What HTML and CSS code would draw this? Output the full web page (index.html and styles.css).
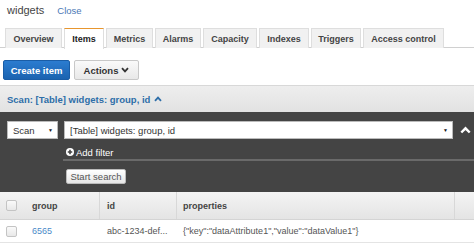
FILE: index.html
```html
<!DOCTYPE html>
<html>
<head>
<meta charset="utf-8">
<link rel="stylesheet" href="styles.css">
</head>
<body>
<div class="header">
  <span class="title">widgets</span>
  <a class="close">Close</a>
</div>
<div class="tabs">
  <div class="tab w1">Overview</div>
  <div class="tab w2 active">Items</div>
  <div class="tab w3">Metrics</div>
  <div class="tab w4">Alarms</div>
  <div class="tab w5">Capacity</div>
  <div class="tab w6">Indexes</div>
  <div class="tab w6">Triggers</div>
  <div class="tab w8">Access control</div>
</div>
<div class="toolbar">
  <button class="btn primary">Create item</button>
  <button class="btn secondary">Actions
    <svg class="chev" width="8" height="6" viewBox="0 0 8 6"><path d="M1 1.2 L4 4.4 L7 1.2" fill="none" stroke="#333" stroke-width="1.8"/></svg>
  </button>
</div>
<div class="scanbar">
  <span>Scan: [Table] widgets: group, id</span>
  <svg class="chev-up" width="8" height="6" viewBox="0 0 8 6"><path d="M1 4.8 L4 1.6 L7 4.8" fill="none" stroke="#2e6ea8" stroke-width="1.8"/></svg>
</div>
<div class="panel">
  <div class="row1">
    <div class="select small">Scan<span class="arrow">&#9660;</span></div>
    <div class="select wide">[Table] widgets: group, id<span class="arrow">&#9660;</span></div>
    <svg class="collapse" width="11" height="8" viewBox="0 0 11 8"><path d="M1.3 6.5 L5.5 2.3 L9.7 6.5" fill="none" stroke="#fff" stroke-width="2.4"/></svg>
  </div>
  <div class="filters">
    <div class="addfilter">
      <svg width="8" height="8" viewBox="0 0 10 10"><circle cx="5" cy="5" r="5" fill="#fff"/><path d="M5 2.2 V7.8 M2.2 5 H7.8" stroke="#444" stroke-width="2"/></svg>
      <span>Add filter</span>
    </div>
    <div class="searchrow"><button class="startbtn">Start search</button></div>
  </div>
</div>
<div class="grid">
  <div class="hrow">
    <div class="cell cb"><span class="check"></span></div>
    <div class="cell c1">group</div>
    <div class="cell c2">id</div>
    <div class="cell c3">properties</div>
    <div class="cell c4"></div>
  </div>
  <div class="drow">
    <div class="cell cb"><span class="check"></span></div>
    <div class="cell c1 link">6565</div>
    <div class="cell c2">abc-1234-def...</div>
    <div class="cell c3">{"key":"dataAttribute1","value":"dataValue1"}</div>
    <div class="cell c4"></div>
  </div>
</div>
</body>
</html>
```
FILE: styles.css
```css
* { box-sizing: border-box; }
html, body { margin: 0; padding: 0; background: #fff; }
body {
  font-family: "Liberation Sans", Arial, sans-serif;
  color: #333;
  width: 474px;
  height: 249px;
  overflow: hidden;
}
.header {
  height: 28px;
  padding: 4px 0 0 7px;
  display: flex;
  align-items: baseline;
}
.title { font-size: 11px; color: #444; }
.close { font-size: 9.5px; color: #4a78b5; margin-left: 13px; }
.tabs {
  display: flex;
  gap: 2px;
  padding-left: 5px;
  height: 20px;
  border-bottom: 1px solid #d0d0d0;
}
.tab {
  height: 20px;
  background: #f1f1f1;
  border: 1px solid #dedede;
  border-bottom: none;
  font-size: 9px;
  font-weight: bold;
  color: #444;
  padding-top: 5px;
  text-align: center;
  white-space: nowrap;
}
.w1 { width: 57px; }
.w2 { width: 40px; }
.w3 { width: 47px; }
.w4 { width: 46px; }
.w5 { width: 54px; }
.w6 { width: 50px; }
.w8 { width: 81px; }
.tab.active {
  background: #fff;
  border-top: 1px solid #e8962e;
  color: #222;
  height: 21px;
  margin-bottom: -1px;
}
.toolbar {
  display: flex;
  gap: 4px;
  padding: 12px 0 0 3px;
}
.btn {
  height: 20px;
  font-family: inherit;
  font-size: 9.5px;
  font-weight: bold;
  border-radius: 2px;
  padding: 0;
  display: flex;
  align-items: center;
  white-space: nowrap;
}
.primary {
  width: 67px;
  background: linear-gradient(#2b7cd0, #1b63b0);
  border: 1px solid #1a5da6;
  color: #fff;
  justify-content: center;
}
.secondary {
  width: 65px;
  background: linear-gradient(#fafafa, #e8e8e8);
  border: 1px solid #c8c8c8;
  color: #333;
  justify-content: center;
  gap: 3px;
}
.scanbar {
  margin-top: 5px;
  height: 27px;
  border-top: 1px solid #d8d8d8;
  background: linear-gradient(#eeeeee, #e2e2e2);
  display: flex;
  align-items: center;
  padding-left: 7px;
  font-size: 9.5px;
  font-weight: bold;
  color: #2e6ea8;
  gap: 4px;
}
.panel {
  background: #444;
  height: 80px;
  padding: 9px 0 0 7px;
}
.row1 {
  display: flex;
  align-items: center;
  height: 18px;
}
.select {
  height: 18px;
  background: #fff;
  border: 1px solid #bbb;
  font-size: 9.5px;
  color: #333;
  display: flex;
  align-items: center;
  padding-left: 5px;
  justify-content: space-between;
  padding-right: 4px;
}
.select .arrow { font-size: 5px; color: #111; }
.select.small { width: 51px; }
.select.wide { width: 389px; margin-left: 6px; padding-left: 5px; }
.collapse { margin-left: 7px; }
.filters { margin-left: 56px; }
.addfilter {
  display: flex;
  align-items: center;
  gap: 2px;
  padding: 6px 0 0 3px;
  height: 22px;
  font-size: 9.5px;
  color: #fff;
  border-bottom: 2px solid #6a6a6a;
}
.searchrow { padding: 5px 0 0 3px; }
.startbtn {
  height: 15px;
  width: 60px;
  font-family: inherit;
  font-size: 9.5px;
  color: #555;
  background: linear-gradient(#ffffff, #e6e6e6);
  border: 1px solid #bbb;
  border-radius: 2px;
  padding: 0;
  white-space: nowrap;
}
.grid { font-size: 9px; }
.hrow {
  display: flex;
  height: 28px;
  background: linear-gradient(#f4f4f4, #e4e4e4);
  border-bottom: 1px solid #d4d4d4;
  font-weight: bold;
  color: #444;
}
.drow {
  display: flex;
  height: 23px;
  border-bottom: 1px solid #e4e4e4;
  color: #555;
}
.cell {
  display: flex;
  align-items: center;
  padding-left: 7px;
  border-right: 1px solid #d8d8d8;
  white-space: nowrap;
  overflow: hidden;
}
.drow .cell { border-right: none; }
.cb { width: 25px; padding-left: 6px; border-right: none; }
.c1 { width: 75px; padding-left: 7px; }
.c2 { width: 77px; }
.c3 { width: 278px; padding-left: 6px; }
.c4 { flex: 1; border-right: none; }
.link { color: #4a8ac8; }
.check {
  width: 11px;
  height: 11px;
  border: 1px solid #c4c4c4;
  border-radius: 2px;
  background: linear-gradient(#fafafa, #e8e8e8);
}
```
